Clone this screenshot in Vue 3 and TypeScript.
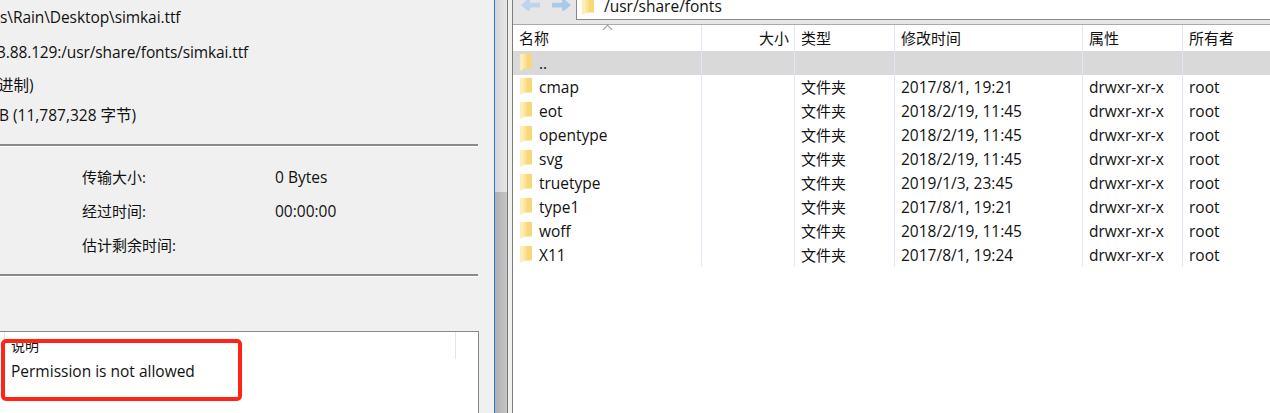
<script setup lang="ts">
// Colonnes et lignes de la liste de fichiers
const columns = [
  { label: '名称', cls: 'name' },
  { label: '大小', cls: 'size' },
  { label: '类型', cls: 'type' },
  { label: '修改时间', cls: 'date' },
  { label: '属性', cls: 'attr' },
  { label: '所有者', cls: 'owner' },
]

const rows = [
  { name: '..', type: '', date: '', attr: '', owner: '' },
  { name: 'cmap', type: '文件夹', date: '2017/8/1, 19:21', attr: 'drwxr-xr-x', owner: 'root' },
  { name: 'eot', type: '文件夹', date: '2018/2/19, 11:45', attr: 'drwxr-xr-x', owner: 'root' },
  { name: 'opentype', type: '文件夹', date: '2018/2/19, 11:45', attr: 'drwxr-xr-x', owner: 'root' },
  { name: 'svg', type: '文件夹', date: '2018/2/19, 11:45', attr: 'drwxr-xr-x', owner: 'root' },
  { name: 'truetype', type: '文件夹', date: '2019/1/3, 23:45', attr: 'drwxr-xr-x', owner: 'root' },
  { name: 'type1', type: '文件夹', date: '2017/8/1, 19:21', attr: 'drwxr-xr-x', owner: 'root' },
  { name: 'woff', type: '文件夹', date: '2018/2/19, 11:45', attr: 'drwxr-xr-x', owner: 'root' },
  { name: 'X11', type: '文件夹', date: '2017/8/1, 19:24', attr: 'drwxr-xr-x', owner: 'root' },
]

const stats = [
  { label: '传输大小:', value: '0 Bytes' },
  { label: '经过时间:', value: '00:00:00' },
  { label: '估计剩余时间:', value: '' },
]
</script>

<template>
  <div class="screen">
    <section class="details">
      <div class="info">
        <p class="source">s\Rain\Desktop\simkai.ttf</p>
        <p class="target">3.88.129:/usr/share/fonts/simkai.ttf</p>
        <p class="mode">进制)</p>
        <p class="bytes">B (11,787,328 字节)</p>
      </div>
      <hr class="rule" />
      <div class="stats">
        <div v-for="stat in stats" :key="stat.label" class="stat">
          <span class="stat-label">{{ stat.label }}</span>
          <span>{{ stat.value }}</span>
        </div>
      </div>
      <hr class="rule" />
      <div class="log">
        <div class="log-head"><span>说明</span></div>
        <p class="log-text">Permission is not allowed</p>
        <div class="highlight"></div>
      </div>
    </section>

    <div class="splitter">
      <div class="track"></div>
    </div>

    <section class="browser">
      <div class="toolbar">
        <svg class="arrow" width="19" height="13" viewBox="0 0 20 13">
          <path d="M0 6 7 0h2.500v3.500H20v5H9.500V12H7z" fill="#bcd5ec" />
        </svg>
        <svg class="arrow" width="19" height="13" viewBox="0 0 20 13">
          <path d="M20 6 13 0h-2.500v3.500H0v5h10.500V12H13z" fill="#a9cbe8" />
        </svg>
        <div class="path">
          <svg class="folder" width="12" height="17" viewBox="0 0 12 17">
            <path d="M3 0h9v14.500H3z" fill="#f7d878" />
            <path d="M3 0h3.500v14.500H3z" fill="#fbe39a" />
            <path d="M0 0h3.500v15L0 17z" fill="#fdeeb8" />
          </svg>
          <span>/usr/share/fonts</span>
        </div>
      </div>
      <div class="head">
        <span class="sort"></span>
        <div v-for="col in columns" :key="col.label" class="cell" :class="col.cls">{{ col.label }}</div>
      </div>
      <div v-for="row in rows" :key="row.name" class="row" :class="{ parent: row.name === '..' }">
        <div class="cell name">
          <svg class="folder" width="12" height="17" viewBox="0 0 12 17">
            <path d="M3 0h9v14.500H3z" fill="#f7d878" />
            <path d="M3 0h3.500v14.500H3z" fill="#fbe39a" />
            <path d="M0 0h3.500v15L0 17z" fill="#fdeeb8" />
          </svg>
          <span>{{ row.name }}</span>
        </div>
        <div class="cell size"></div>
        <div class="cell type">{{ row.type }}</div>
        <div class="cell date">{{ row.date }}</div>
        <div class="cell attr">{{ row.attr }}</div>
        <div class="cell owner">{{ row.owner }}</div>
      </div>
    </section>
  </div>
</template>

<style>
html,
body {
  margin: 0;
  overflow: hidden;
}
</style>

<style scoped>
.screen {
  display: flex;
  width: 1270px;
  height: 413px;
  overflow: hidden;
  background: #fff;
  color: #111;
  font-family: "Open Sans", "Noto Sans CJK SC", sans-serif;
  font-size: 15.5px;
}

p {
  margin: 0;
}

/* Panneau de gauche */
.details {
  position: relative;
  width: 494px;
  flex: none;
  background: #f0f0f0;
  overflow: hidden;
}

.info {
  height: 144px;
  white-space: nowrap;
  overflow: hidden;
}

.source {
  margin: 6px 0 0 0;
  line-height: 22px;
  letter-spacing: -0.08px;
}

.target {
  margin: 13px 0 0 -3px;
  line-height: 22px;
  letter-spacing: -0.12px;
}

.mode {
  margin: 11px 0 0 -2px;
  line-height: 22px;
}

.bytes {
  margin: 8px 0 0 -1px;
  line-height: 22px;
}

.rule {
  width: 478px;
  height: 2px;
  margin: 0;
  border: 0;
  background: #8a8a8a;
  box-shadow: 0 1px 0 #fff;
}

.stats {
  height: 128px;
  padding: 20px 0 0 82px;
  box-sizing: border-box;
}

.stat {
  display: flex;
  height: 34px;
  line-height: 22px;
}

.stat-label {
  width: 193px;
  font-size: 15px;
}

.log {
  position: relative;
  box-sizing: border-box;
  width: 479px;
  height: 90px;
  margin-top: 55px;
  background: #fff;
  border-top: 1px solid #888;
  border-right: 1px solid #888;
}

.log-head {
  height: 27px;
  margin-left: 4px;
  margin-right: 22px;
  padding-left: 7px;
  font-size: 14px;
  line-height: 26px;
  overflow: hidden;
  border-left: 1px solid #e5e5e5;
  border-right: 1px solid #e5e5e5;
}

.log-head span {
  position: relative;
  top: 1px;
  left: -1px;
}

.log-text {
  margin-top: 1px;
  margin-left: 11px;
  line-height: 22px;
}

.highlight {
  position: absolute;
  left: 1px;
  top: 7px;
  width: 233px;
  height: 54px;
  border: 4px solid #ff2416;
  border-radius: 5px;
}

/* Séparateur et barre de défilement */
.splitter {
  flex: none;
  width: 18px;
  background: #f0f0f0;
  border-left: 1px solid #1a80d8;
  box-sizing: border-box;
}

.track {
  position: relative;
  box-sizing: border-box;
  width: 13px;
  height: 100%;
  background: linear-gradient(90deg, #d4d4d4, #e8e8e8);
  border-right: 1px solid #777;
}

.track::after {
  content: "";
  position: absolute;
  left: 0;
  right: 0;
  top: 192px;
  bottom: 0;
  background: linear-gradient(90deg, #aeaeae, #c6c6c6);
}

/* Panneau de droite */
.browser {
  flex: 1;
  min-width: 0;
  border-left: 1px solid #7d7d7d;
  background: #fff;
}

.toolbar {
  display: flex;
  height: 24px;
  padding-left: 8px;
  background: #e6e6e6;
  border-bottom: 1px solid #aaa;
}

.arrow {
  flex: none;
  margin-right: 12px;
  margin-top: -1px;
}

.arrow + .arrow {
  margin-right: 5px;
}

.path {
  display: flex;
  align-items: center;
  flex: 1;
  height: 19px;
  padding-left: 5px;
  line-height: 12px;
  background: #fff;
  border-left: 1px solid #888;
  border-bottom: 1px solid #888;
}

.path .folder {
  margin-top: -6px;
  margin-right: 10px;
}

.path span {
  position: relative;
  top: -4px;
}

.head,
.row {
  display: flex;
  position: relative;
}

.head {
  height: 26px;
  font-size: 15px;
  line-height: 26px;
}

.row {
  height: 24px;
  line-height: 24px;
}

.parent {
  background: #d9d9d9;
}

.cell {
  flex: none;
  box-sizing: border-box;
  padding-left: 6px;
  border-right: 1px solid #dfe9f5;
  white-space: nowrap;
  overflow: hidden;
}

.name {
  display: flex;
  align-items: center;
  width: 189px;
  padding-left: 7px;
}

.row .name .folder {
  flex: none;
  margin-right: 7px;
  margin-top: -1px;
}

.size {
  width: 93px;
  padding-right: 5px;
  text-align: right;
}

.type {
  width: 100px;
}

.row .type {
  font-size: 15px;
}

.date {
  width: 188px;
}

.attr {
  width: 100px;
}

.owner {
  flex: 1;
  border-right: 0;
}

.head .name {
  padding-left: 6px;
}

.sort {
  position: absolute;
  left: 91px;
  top: 1px;
  width: 6px;
  height: 6px;
  border-left: 1px solid #999;
  border-top: 1px solid #999;
  transform: rotate(45deg);
}
</style>
